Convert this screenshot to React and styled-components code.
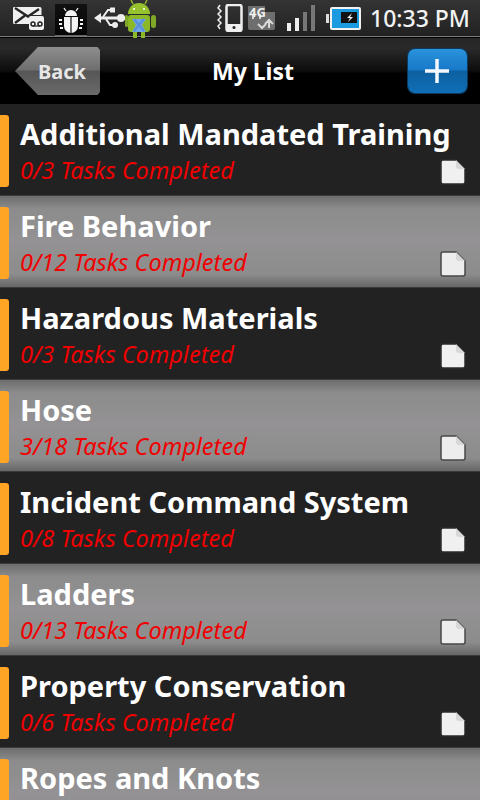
import styled, { createGlobalStyle } from "styled-components";

const GlobalStyle = createGlobalStyle`
  html, body {
    margin: 0;
    padding: 0;
    background: #000;
  }
  body {
    font-family: "Noto Sans", "Open Sans", sans-serif;
  }
`;

const Screen = styled.div`
  width: 480px;
  height: 800px;
  overflow: hidden;
  background: #000;
`;

const StatusBar = styled.div`
  height: 36px;
  display: flex;
  align-items: center;
  justify-content: space-between;
  background: linear-gradient(#343434, #222222);
  border-bottom: 1px solid #7a7a7a;
  box-sizing: content-box;
`;

const StatusGroup = styled.div`
  display: flex;
  align-items: center;
  height: 100%;
`;

const ActiveSlot = styled.div`
  width: 32px;
  height: 31px;
  margin: 4px 0 0 9px;
  display: flex;
  align-items: center;
  justify-content: center;
  background: linear-gradient(#111, #050505);
  border-bottom: 1px solid #666;
`;

const Clock = styled.span`
  font-family: "Noto Sans", sans-serif;
  font-size: 23px;
  color: #f2f2f2;
  font-weight: 500;
  margin: 0 10px 0 8px;
  white-space: nowrap;
`;

const Header = styled.div`
  height: 66px;
  margin-top: 1px;
  display: flex;
  align-items: center;
  justify-content: space-between;
  padding: 0 13px 0 15px;
  background: linear-gradient(#262626 0%, #2a2a2a 15%, #0c0c0c 50%, #000 54%, #000 100%);
`;

const BackButton = styled.div`
  width: 85px;
  height: 48px;
  display: flex;
  align-items: center;
  justify-content: flex-end;
  padding-right: 14px;
  box-sizing: border-box;
  color: #e6e6e6;
  font-size: 20px;
  font-weight: 700;
  background: linear-gradient(#8e8e8e 0%, #6e6e6e 48%, #565656 50%, #6a6a6a 100%);
  clip-path: polygon(27% 0, 97% 0, 100% 6%, 100% 94%, 97% 100%, 27% 100%, 0 50%);
`;

const Title = styled.h1`
  margin: 0;
  color: #fff;
  font-size: 23px;
  font-weight: 700;
  letter-spacing: 0;
  position: relative;
  left: -1px;
`;

const AddButton = styled.div`
  width: 59px;
  height: 44px;
  display: flex;
  align-items: center;
  justify-content: center;
  border-radius: 7px;
  background: linear-gradient(#2a93dc 0%, #1878c8 48%, #0c5f9f 50%, #1170b8 100%);
  box-shadow: 0 0 0 1px #0a3a5e;
`;

const List = styled.div`
  display: flex;
  flex-direction: column;
`;

const Row = styled.div`
  height: 92px;
  flex: none;
  box-sizing: border-box;
  position: relative;
  padding: 12px 0 0 20px;
  border-bottom: 1px solid #3a3a3a;
  background: ${(p) =>
    p.$light
      ? "linear-gradient(#6c6c6c 0%, #8c8c8c 14%, #949294 50%, #8c8c8c 86%, #666 100%)"
      : "#222222"};
`;

const Marker = styled.div`
  position: absolute;
  left: 0;
  top: 11px;
  width: 9px;
  height: 72px;
  background: #ffa526;
  border-radius: 0 3px 3px 0;
`;

const RowTitle = styled.div`
  color: #fff;
  font-size: 29px;
  font-weight: 700;
  line-height: 36px;
  white-space: nowrap;
`;

const RowSub = styled.div`
  color: #f00000;
  font-size: 23.5px;
  font-style: italic;
  line-height: 32px;
  margin-top: 2px;
  white-space: nowrap;
`;

const NoteWrap = styled.div`
  position: absolute;
  right: 13px;
  bottom: 9px;
  display: flex;
`;

const MailIcon = () => (
  <svg width="34" height="26" viewBox="0 0 34 26" style={{ marginLeft: 12, marginTop: 2 }}>
    <path d="M2 1h26a1.500 1.500 0 0 1 1.500 1.500V9H20a3 3 0 0 0-3 3v6H2.500A1.500 1.500 0 0 1 1 16.500v-14A1.500 1.500 0 0 1 2 1z" fill="#f0f0f0" />
    <path d="M3 2l13 8.500L27 3M3 17l10-7.500" stroke="#262626" strokeWidth="2.400" fill="none" />
    <rect x="17" y="10" width="15" height="14" rx="2" fill="#f0f0f0" />
    <circle cx="21" cy="18" r="2" fill="none" stroke="#222" strokeWidth="1.500" />
    <circle cx="28" cy="18" r="2" fill="none" stroke="#222" strokeWidth="1.500" />
    <path d="M21 20h7" stroke="#222" strokeWidth="1.200" />
  </svg>
);

const BugIcon = () => (
  <svg width="26" height="27" viewBox="0 0 26 27">
    <path d="M7 10a6 6 0 0 1 12 0z" fill="#f4f4f4" />
    <path d="M8 5L6 2M18 5l2-3" stroke="#f4f4f4" strokeWidth="1.300" />
    <path d="M6 11h14v9a7 7 0 0 1-14 0z" fill="#f4f4f4" />
    <path d="M13 11v16" stroke="#111" strokeWidth="1.200" />
    <path d="M1 14h3M1 18h3M2 22h3M22 14h3M22 18h3M21 22h3" stroke="#f4f4f4" strokeWidth="2" />
  </svg>
);

const UsbIcon = () => (
  <svg width="32" height="26" viewBox="0 0 32 26" style={{ marginLeft: 6 }}>
    <path d="M1 13l7-5v3.500h24v3H8V18z" fill="#eee" />
    <path d="M10 12l5-7h3M13 14l4 6h3" stroke="#eee" strokeWidth="2" fill="none" />
    <rect x="17" y="2.500" width="5" height="5" fill="#eee" />
    <circle cx="22" cy="20" r="3" fill="#eee" />
    <circle cx="28" cy="13" r="4" fill="#eee" />
  </svg>
);

const DroidIcon = () => (
  <svg width="32" height="38" viewBox="0 0 32 38" style={{ marginLeft: 0, alignSelf: "flex-start" }}>
    <path d="M8 4L6 0M20 4l2-4" stroke="#8fb82c" strokeWidth="1.500" />
    <path d="M3 14a11 11 0 0 1 22 0z" fill="#96c22e" />
    <rect x="3" y="15" width="22" height="17" rx="3" fill="#8cb828" />
    <rect x="26" y="15" width="5" height="13" rx="2.500" fill="#7fa826" />
    <rect x="0" y="15" width="3" height="12" rx="1.500" fill="#7fa826" />
    <rect x="8" y="31" width="4" height="7" fill="#8cb828" />
    <rect x="16" y="31" width="4" height="7" fill="#8cb828" />
    <circle cx="9" cy="9" r="1" fill="#fff" />
    <circle cx="19" cy="9" r="1" fill="#fff" />
    <path d="M7 19l14 0-4 6 4 7H7l4-7z" fill="#6fa6e8" />
    <path d="M9 19l10 12M19 19L9 31" stroke="#5a8fd8" strokeWidth="2" />
  </svg>
);

const VibrateIcon = () => (
  <svg width="26" height="28" viewBox="0 0 26 28">
    <path d="M3 1l-2 3 3 3-3 3 3 3-3 3 3 3-3 3 2 3" stroke="#eee" strokeWidth="1.500" fill="none" />
    <rect x="9.500" y="1" width="15" height="26" rx="2" fill="none" stroke="#eee" strokeWidth="2.500" />
    <rect x="9" y="20" width="16" height="7" rx="1.500" fill="#eee" />
    <circle cx="17" cy="23.500" r="1.500" fill="#222" />
  </svg>
);

const NetworkIcon = () => (
  <svg width="30" height="28" viewBox="0 0 30 28" style={{ marginLeft: 4 }}>
    <path d="M1 2h17v6h10v16a2 2 0 0 1-2 2H3a2 2 0 0 1-2-2z" fill="#6e6e6e" />
    <path d="M6 15V10M13 15V10M11 20l4 4 4-4M22 24v-7M18 20l4-4 4 4" stroke="#d8d8d8" strokeWidth="2" fill="none" />
    <text x="2" y="13" fontSize="13" fontWeight="700" fill="#eee" fontFamily="Noto Sans, sans-serif">4G</text>
  </svg>
);

const SignalIcon = () => (
  <svg width="30" height="28" viewBox="0 0 30 28" style={{ marginLeft: 9 }}>
    <rect x="1" y="19" width="4" height="8" fill="#eee" />
    <rect x="9" y="14" width="4" height="13" fill="#eee" />
    <rect x="17" y="8" width="4" height="19" fill="#777" />
    <rect x="25" y="1" width="4" height="26" fill="#777" />
  </svg>
);

const BatteryIcon = () => (
  <svg width="36" height="25" viewBox="0 0 36 25" style={{ marginLeft: 10 }}>
    <rect x="0" y="8" width="3" height="9" fill="#ddd" />
    <rect x="4" y="1" width="31" height="23" rx="2" fill="#f2f2f2" />
    <rect x="6" y="3" width="27" height="19" fill="#1a9be0" />
    <rect x="15" y="6" width="16" height="11" fill="#111" />
    <path d="M26 7l-5 5h3l-2 4 5-5h-3z" fill="#f2f2f2" />
  </svg>
);

const PlusIcon = () => (
  <svg width="26" height="26" viewBox="0 0 26 26">
    <path d="M13 1v24M1 13h24" stroke="#f4f8fc" strokeWidth="3.500" />
  </svg>
);

const NoteIcon = ({ light }) => (
  <svg width="28" height="28" viewBox="0 0 28 28">
    <path
      d="M4 2h13l9 9v13a2 2 0 0 1-2 2H4a2 2 0 0 1-2-2V4a2 2 0 0 1 2-2z"
      fill={light ? "#ededed" : "#f0f0f0"}
      stroke={light ? "#484848" : "#2c2c2c"}
      strokeWidth="1.500"
    />
    <path d="M17 2v6a3 3 0 0 0 3 3h6" fill="#d8d8d8" />
  </svg>
);

const items = [
  ["Additional Mandated Training", "0/3"],
  ["Fire Behavior", "0/12"],
  ["Hazardous Materials", "0/3"],
  ["Hose", "3/18"],
  ["Incident Command System", "0/8"],
  ["Ladders", "0/13"],
  ["Property Conservation", "0/6"],
  ["Ropes and Knots", "0/9"],
];

export default function App() {
  return (
    <Screen>
      <GlobalStyle />
      <StatusBar>
        <StatusGroup>
          <MailIcon />
          <ActiveSlot>
            <BugIcon />
          </ActiveSlot>
          <UsbIcon />
          <DroidIcon />
        </StatusGroup>
        <StatusGroup>
          <VibrateIcon />
          <NetworkIcon />
          <SignalIcon />
          <BatteryIcon />
          <Clock>10:33 PM</Clock>
        </StatusGroup>
      </StatusBar>
      <Header>
        <BackButton>Back</BackButton>
        <Title>My List</Title>
        <AddButton>
          <PlusIcon />
        </AddButton>
      </Header>
      <List>
        {items.map(([name, done], i) => (
          <Row key={name} $light={i % 2 === 1}>
            <Marker />
            <RowTitle>{name}</RowTitle>
            <RowSub>{done} Tasks Completed</RowSub>
            <NoteWrap>
              <NoteIcon light={i % 2 === 1} />
            </NoteWrap>
          </Row>
        ))}
      </List>
    </Screen>
  );
}
